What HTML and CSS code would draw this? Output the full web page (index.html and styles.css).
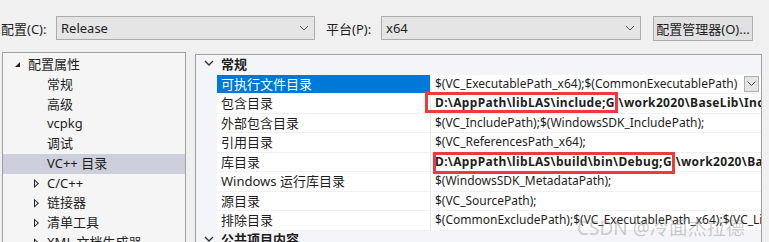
FILE: index.html
```html
<!DOCTYPE html>
<html lang="zh-CN">
<head>
    <meta charset="UTF-8">
    <title>属性页</title>
    <link rel="stylesheet" href="styles.css">
</head>
<body>
    <div class="toolbar">
        <label class="lbl">配置(C):</label>
        <div class="combo combo-config">
            <span>Release</span>
            <svg class="chev" width="10" height="6" viewBox="0 0 10 6"><polyline points="1,1 5,5 9,1" fill="none" stroke="#555" stroke-width="1"/></svg>
        </div>
        <label class="lbl lbl-plat">平台(P):</label>
        <div class="combo combo-plat">
            <span>x64</span>
            <svg class="chev" width="10" height="6" viewBox="0 0 10 6"><polyline points="1,1 5,5 9,1" fill="none" stroke="#555" stroke-width="1"/></svg>
        </div>
        <button class="btn">配置管理器(O)...</button>
    </div>

    <div class="main">
        <div class="tree">
            <div class="node root"><span class="tri-open"></span>配置属性</div>
            <div class="node leaf">常规</div>
            <div class="node leaf">高级</div>
            <div class="node leaf">vcpkg</div>
            <div class="node leaf">调试</div>
            <div class="node leaf selected">VC++ 目录</div>
            <div class="node branch"><span class="tri-closed"></span>C/C++</div>
            <div class="node branch"><span class="tri-closed"></span>链接器</div>
            <div class="node branch"><span class="tri-closed"></span>清单工具</div>
            <div class="node branch"><span class="tri-closed"></span>XML 文档生成器</div>
        </div>

        <div class="grid">
            <div class="cat">
                <svg class="cat-chev" width="10" height="6" viewBox="0 0 10 6"><polyline points="1,1 5,5 9,1" fill="none" stroke="#333" stroke-width="1.4"/></svg>
                <span>常规</span>
            </div>
            <div class="prop active">
                <div class="name">可执行文件目录</div>
                <div class="val">$(VC_ExecutablePath_x64);$(CommonExecutablePath)
                    <span class="drop"><svg width="9" height="5" viewBox="0 0 9 5"><polyline points="0.5,0.5 4.5,4.5 8.5,0.5" fill="none" stroke="#444" stroke-width="1"/></svg></span>
                </div>
            </div>
            <div class="prop">
                <div class="name">包含目录</div>
                <div class="val bold">D:\AppPath\libLAS\include;G:\work2020\BaseLib\Include</div>
            </div>
            <div class="prop">
                <div class="name">外部包含目录</div>
                <div class="val">$(VC_IncludePath);$(WindowsSDK_IncludePath);</div>
            </div>
            <div class="prop">
                <div class="name">引用目录</div>
                <div class="val">$(VC_ReferencesPath_x64);</div>
            </div>
            <div class="prop">
                <div class="name">库目录</div>
                <div class="val bold">D:\AppPath\libLAS\build\bin\Debug;G:\work2020\BaseLib\Lib</div>
            </div>
            <div class="prop">
                <div class="name">Windows 运行库目录</div>
                <div class="val">$(WindowsSDK_MetadataPath);</div>
            </div>
            <div class="prop">
                <div class="name">源目录</div>
                <div class="val">$(VC_SourcePath);</div>
            </div>
            <div class="prop">
                <div class="name">排除目录</div>
                <div class="val">$(CommonExcludePath);$(VC_ExecutablePath_x64);$(VC_LibraryPath_x64)</div>
            </div>
            <div class="cat">
                <svg class="cat-chev" width="10" height="6" viewBox="0 0 10 6"><polyline points="1,1 5,5 9,1" fill="none" stroke="#333" stroke-width="1.4"/></svg>
                <span>公共项目内容</span>
            </div>
        </div>
    </div>

    <div class="mark mark-1"></div>
    <div class="mark mark-2"></div>
    <div class="watermark">CSDN @冷面杰拉德</div>
</body>
</html>
```

FILE: styles.css
```css
body {
    margin: 0;
    width: 769px;
    height: 242px;
    overflow: hidden;
    background-color: #f0f0f0;
    color: #1e1e1e;
    font-family: "Noto Sans", "Noto Sans CJK SC", sans-serif;
    font-size: 12px;
    position: relative;
}
.toolbar {
    display: flex;
    align-items: center;
    height: 48px;
    padding-top: 4px;
    padding-left: 1px;
}
.lbl {
    width: 55px;
    font-size: 13px;
}
.lbl-plat {
    margin-left: 11px;
}
.combo {
    height: 24px;
    box-sizing: border-box;
    border: 1px solid #acacac;
    background-color: #e5e5e5;
    display: flex;
    align-items: center;
    justify-content: space-between;
    padding: 0 4px 0 4px;
    font-size: 13px;
}
.combo-config {
    width: 259px;
}
.combo-plat {
    width: 260px;
}
.chev {
    margin-right: 1px;
}
.btn {
    margin-left: 12px;
    width: 100px;
    height: 25px;
    border: 1px solid #adadad;
    background-color: #e1e1e1;
    font-family: inherit;
    font-size: 13px;
    padding: 0;
    color: #1e1e1e;
}
.main {
    display: flex;
    align-items: flex-start;
}
.tree {
    margin-left: 2px;
    width: 184px;
    height: 200px;
    box-sizing: border-box;
    border: 1px solid #a0a0a0;
    border-bottom: none;
    background-color: #f5f5f5;
    padding-top: 2px;
}
.node {
    height: 19.75px;
    line-height: 19.75px;
    font-size: 13px;
    display: flex;
    align-items: center;
    white-space: nowrap;
}
.root {
    padding-left: 10px;
}
.leaf {
    padding-left: 44px;
}
.branch {
    padding-left: 31px;
}
.selected {
    background-color: #cdd0dc;
}
.tri-open {
    width: 0;
    height: 0;
    border-left: 5px solid transparent;
    border-bottom: 5px solid #222;
    margin-right: 8px;
    margin-left: 2px;
}
.tri-closed {
    width: 5px;
    height: 9px;
    margin-right: 8px;
    background: #222;
    clip-path: polygon(0 0, 100% 50%, 0 100%, 0 0, 1px 2px, 1px calc(100% - 2px), calc(100% - 1.5px) 50%, 1px 2px);
}
.grid {
    margin-top: 2px;
    margin-left: 9px;
    width: 567px;
    height: 190px;
    box-sizing: border-box;
    border: 1px solid #a0a0a0;
    border-bottom: none;
    background-color: #fff;
    overflow: hidden;
}
.cat {
    height: 19.5px;
    display: flex;
    align-items: center;
    background-color: #f4f5f9;
    font-weight: bold;
    font-size: 13px;
}
.cat span {
    margin-top: -3px;
}
.cat-chev {
    margin-left: 8px;
    margin-right: 7px;
    margin-top: -3px;
}
.prop {
    display: grid;
    grid-template-columns: 214px 1fr;
    margin-left: 21px;
    height: 19.5px;
    box-shadow: -21px 0 0 #f4f5f9;
    border-bottom: 1px solid #f0f0f0;
    box-sizing: border-box;
}
.name {
    padding-left: 4px;
    line-height: 18.5px;
    font-size: 13px;
    border-right: 1px solid #e8e8e8;
    white-space: nowrap;
}
.active .name {
    background-color: #0078d7;
    color: #fff;
}
.val {
    padding-left: 4px;
    line-height: 18.5px;
    white-space: nowrap;
    overflow: hidden;
    position: relative;
}
.bold {
    font-weight: bold;
    letter-spacing: 0.35px;
}
.drop {
    position: absolute;
    right: 2px;
    top: 1px;
    width: 15px;
    height: 16px;
    box-sizing: border-box;
    border: 1px solid #adadad;
    background-color: #e5e5e5;
    display: flex;
    align-items: center;
    justify-content: center;
}
.mark {
    position: absolute;
    border: 3px solid #ed3b3b;
    box-sizing: border-box;
}
.mark-1 {
    left: 425px;
    top: 92px;
    width: 193px;
    height: 21px;
}
.mark-2 {
    left: 433px;
    top: 152px;
    width: 242px;
    height: 22px;
}
.watermark {
    position: absolute;
    left: 577px;
    top: 213px;
    font-size: 19px;
    color: rgba(130, 130, 130, 0.4);
    white-space: nowrap;
}
```
